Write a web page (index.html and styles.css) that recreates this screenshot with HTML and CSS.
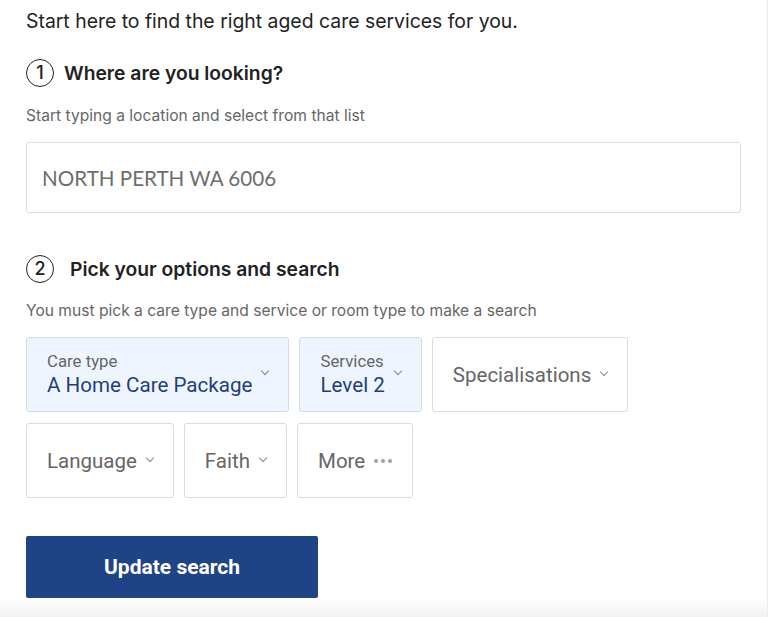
FILE: index.html
```html
<!DOCTYPE html>
<html lang="en">
<head>
  <meta charset="UTF-8">
  <meta name="viewport" content="width=device-width, initial-scale=1.0">
  <title>Find aged care</title>
  <link rel="stylesheet" href="styles.css">
</head>
<body>
  <div class="search-panel">
    <p class="intro">Start here to find the right aged care services for you.</p>

    <h2 class="step"><span class="step-num">1</span>Where are you looking?</h2>
    <p class="hint hint-location">Start typing a location and select from that list</p>
    <input type="text" class="location-input" value="NORTH PERTH WA 6006">

    <h2 class="step step-two"><span class="step-num">2</span>Pick your options and search</h2>
    <p class="hint hint-options">You must pick a care type and service or room type to make a search</p>

    <div class="filters">
      <div class="filter-row">
        <button class="filter selected">
          <span class="filter-text">
            <span class="filter-label">Care type</span>
            <span class="filter-value">A Home Care Package</span>
          </span>
          <span class="chevron"></span>
        </button>
        <button class="filter selected">
          <span class="filter-text">
            <span class="filter-label">Services</span>
            <span class="filter-value">Level 2</span>
          </span>
          <span class="chevron"></span>
        </button>
        <button class="filter">Specialisations <span class="chevron"></span></button>
      </div>
      <div class="filter-row">
        <button class="filter">Language <span class="chevron"></span></button>
        <button class="filter">Faith <span class="chevron"></span></button>
        <button class="filter">More <span class="dots"><i></i><i></i><i></i></span></button>
      </div>
    </div>

    <button class="update-btn">Update search</button>
  </div>
</body>
</html>
```

FILE: styles.css
```css
/* General Styles */
body {
  margin: 0;
  font-family: 'Inter', 'Helvetica', sans-serif;
  background: linear-gradient(to bottom, #fff 0, #fff 598px, #f1f1f1 617px);
  min-height: 617px;
  color: #222;
}

.search-panel {
  padding: 9px 26px 0;
  border-right: 1px solid #ececec;
  min-height: 608px;
}

.intro {
  margin: 0;
  font-size: 19.4px;
  line-height: 24px;
}

.step {
  display: flex;
  align-items: center;
  margin: 26px 0 0;
  font-size: 19.3px;
  font-weight: 600;
  line-height: 28px;
}

.step-num {
  box-sizing: border-box;
  width: 28px;
  height: 28px;
  border: 1.7px solid #222;
  border-radius: 50%;
  display: flex;
  align-items: center;
  justify-content: center;
  font-size: 18px;
  font-weight: 500;
  margin-right: 10px;
}

.step-two {
  margin-top: 42px;
}

.step-two .step-num {
  margin-right: 16px;
}

.hint {
  margin: 19px 0 0;
  font-size: 15.6px;
  line-height: 20px;
  color: #666;
}

.hint-options {
  margin-top: 18px;
}

.location-input {
  display: block;
  box-sizing: border-box;
  width: 715px;
  height: 71px;
  margin-top: 16px;
  padding: 0 15px;
  border: 1px solid #dedede;
  border-radius: 3px;
  font-family: 'Lato', sans-serif;
  font-size: 20.6px;
  color: #6e6e6e;
  outline: none;
}

.filters {
  margin-top: 16px;
  display: flex;
  flex-direction: column;
  gap: 11px;
}

.filter-row {
  display: flex;
  gap: 10px;
}

.filter {
  box-sizing: border-box;
  height: 75px;
  display: flex;
  align-items: center;
  padding: 0 20px;
  border: 1px solid #dcdcdc;
  border-radius: 3px;
  background-color: #fff;
  font-family: 'Roboto', sans-serif;
  font-size: 20.5px;
  color: #666;
  cursor: pointer;
}

.filter.selected {
  background-color: #eff5fe;
  border-color: #d3dcea;
}

.filter-text {
  display: flex;
  flex-direction: column;
  align-items: flex-start;
}

.filter-label {
  font-size: 16.8px;
  line-height: 21px;
  color: #666;
}

.filter-value {
  font-size: 20.6px;
  line-height: 27px;
  color: #1e3f7e;
}

.chevron {
  width: 5px;
  height: 5px;
  margin-left: 10px;
  margin-bottom: 5px;
  border-right: 1px solid #888;
  border-bottom: 1px solid #888;
  transform: rotate(45deg);
}

.selected .chevron {
  margin-left: 10px;
  margin-bottom: 8px;
}

.dots {
  display: flex;
  gap: 3px;
  margin-left: 9px;
}

.dots i {
  width: 4px;
  height: 4px;
  border-radius: 50%;
  background-color: #a0a0a0;
}

.update-btn {
  display: block;
  width: 292px;
  height: 62px;
  margin-top: 38px;
  border: none;
  border-radius: 2px;
  background-color: #1f4387;
  color: #fff;
  font-family: 'Roboto', sans-serif;
  font-size: 21px;
  font-weight: 700;
  cursor: pointer;
}
```
